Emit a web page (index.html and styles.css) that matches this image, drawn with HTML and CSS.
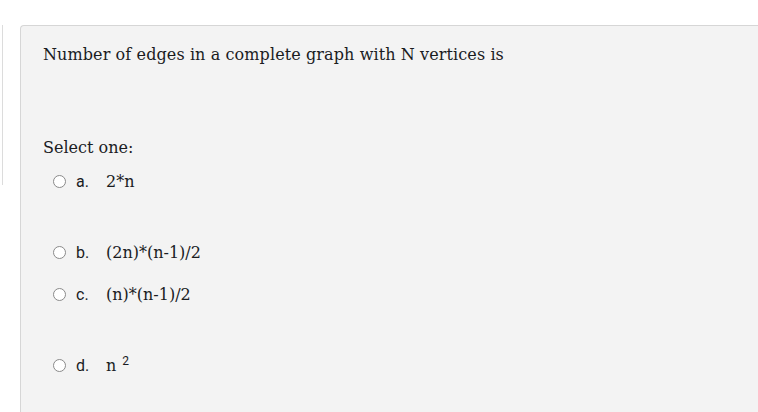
FILE: index.html
```html
<!DOCTYPE html>
<html>
<head>
<meta charset="utf-8">
<link rel="stylesheet" href="styles.css">
</head>
<body>
<div class="page">
  <div class="side"></div>
  <div class="que">
    <div class="qtext">Number of edges in a complete graph with N vertices is</div>
    <div class="prompt">Select one:</div>
    <div class="answers">
      <div class="opt opt-tall"><span class="radio"></span><span class="lbl">a.</span><span class="val">2*n</span></div>
      <div class="opt"><span class="radio"></span><span class="lbl">b.</span><span class="val">(2n)*(n-1)/2</span></div>
      <div class="opt opt-tall"><span class="radio"></span><span class="lbl">c.</span><span class="val">(n)*(n-1)/2</span></div>
      <div class="opt"><span class="radio"></span><span class="lbl">d.</span><span class="val">n<sup class="sup">2</sup></span></div>
    </div>
  </div>
</div>
</body>
</html>
```

FILE: styles.css
```css
html, body {
  margin: 0;
  padding: 0;
  background: #ffffff;
}
body {
  font-family: "DejaVu Serif", "Liberation Serif", serif;
  color: #1a1c1f;
  overflow: hidden;
}
.page {
  display: flex;
  align-items: flex-start;
  padding-top: 25px;
  height: 387px;
}
.side {
  width: 2px;
  height: 160px;
  border-right: 1px solid #dcdcdc;
  flex: none;
}
.que {
  margin-left: 17px;
  flex: 1;
  height: 400px;
  background: #f3f3f3;
  border: 1px solid #d6d6d6;
  border-right: none;
  border-radius: 4px 0 0 0;
  padding: 17px 0 0 22px;
  box-sizing: border-box;
}
.qtext {
  font-size: 16px;
  line-height: 24px;
  letter-spacing: 0.1px;
}
.prompt {
  margin-top: 69px;
  font-size: 16px;
  line-height: 24px;
}
.answers {
  display: flex;
  flex-direction: column;
  margin-top: 9px;
}
.opt {
  display: flex;
  align-items: center;
  height: 24px;
  margin-bottom: 18px;
  font-size: 16px;
}
.opt-tall {
  margin-bottom: 47px;
}
.radio {
  width: 11px;
  height: 11px;
  border: 1px solid #8a8a8a;
  border-radius: 50%;
  background: #ffffff;
  margin-left: 10px;
  flex: none;
}
.lbl {
  margin-left: 10px;
  width: 30px;
  font-family: "Roboto", "Liberation Sans", sans-serif;
  font-size: 16px;
}
.val {
  white-space: nowrap;
}
.sup {
  font-size: 12px;
  vertical-align: 6px;
  line-height: 0;
  margin-left: 6px;
  font-family: "Roboto", sans-serif;
}
```
